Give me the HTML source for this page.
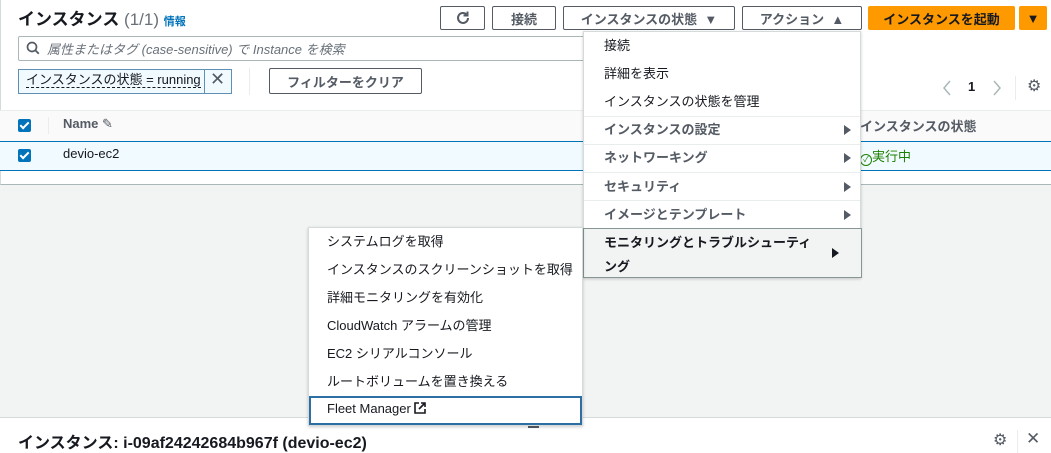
<!DOCTYPE html>
<html><head><meta charset="utf-8"><style>
*{box-sizing:border-box;margin:0;padding:0}
body{width:1051px;height:453px;overflow:hidden;background:#f2f3f3;font-family:"Liberation Sans","Noto Sans CJK JP",sans-serif;font-size:13px;color:#16191f;position:relative}
.a{position:absolute}
.btn{position:absolute;top:6px;height:24px;border:1px solid #545b64;background:#fff;font-weight:bold;color:#545b64;font-size:13px;display:flex;align-items:center;justify-content:center;border-radius:2px}
.mi{position:absolute;left:20px;font-size:13px;color:#16191f}
.arr{position:absolute;left:260px;width:0;height:0;border-top:5px solid transparent;border-bottom:5px solid transparent;border-left:7px solid #545b64}
.cb{position:absolute;width:13px;height:13px;background:#0073bb;border-radius:2px}
.cb:after{content:"";position:absolute;left:4px;top:1px;width:3px;height:7px;border:solid #fff;border-width:0 2px 2px 0;transform:rotate(45deg)}
</style></head><body>
<div class="a" style="left:0;top:0;width:1051px;height:185px;background:#fff;border-bottom:1px solid #aab7b8;border-left:1px solid #d5dbdb"></div>
<div class="a" style="left:18px;top:5px;font-size:17px;font-weight:bold">インスタンス <span style="font-weight:normal;color:#687078">(1/1)</span> <span style="font-size:11px;color:#0073bb;font-weight:bold">情報</span></div>
<div class="btn" style="left:440px;width:45px"><svg width="16" height="16" viewBox="0 0 16 16"><path d="M13 8a5 5 0 1 1-1.6-3.7" fill="none" stroke="#545b64" stroke-width="2"/><path d="M12.5 1.5v4h-4" fill="none" stroke="#545b64" stroke-width="2"/></svg></div>
<div class="btn" style="left:492px;width:64px">接続</div>
<div class="btn" style="left:563px;width:172px">インスタンスの状態&nbsp;&nbsp;▼</div>
<div class="btn" style="left:742px;width:120px">アクション&nbsp;&nbsp;▲</div>
<div class="btn" style="left:868px;width:147px;background:#ff9900;border-color:#ff9900;color:#16191f">インスタンスを起動</div>
<div class="btn" style="left:1019px;width:28px;background:#ff9900;border-color:#ff9900;color:#16191f">▼</div>
<div class="a" style="left:18px;top:36px;width:600px;height:25px;border:1px solid #aab7b8;border-radius:2px"></div>
<svg class="a" style="left:26px;top:41px" width="14" height="14" viewBox="0 0 14 14"><circle cx="6" cy="6" r="4.5" fill="none" stroke="#545b64" stroke-width="1.7"/><path d="M9.3 9.3l3.5 3.5" stroke="#545b64" stroke-width="1.8"/></svg>
<div class="a" style="left:47px;top:39px;font-style:italic;color:#687078">属性またはタグ (case-sensitive) で Instance を検索</div>
<div class="a" style="left:18px;top:69px;width:214px;height:25px;border:1px solid #5f8fb3;background:#f1faff"></div>
<div class="a" style="left:204px;top:69px;width:1px;height:25px;background:#5f8fb3"></div>
<div class="a" style="left:26px;top:72px;border-bottom:1px dashed #16191f;line-height:15px">インスタンスの状態 = running</div>
<div class="a" style="left:210px;top:69px;font-size:18px;color:#545b64">✕</div>
<div class="a" style="left:249px;top:68px;width:1px;height:27px;background:#eaeded"></div>
<div class="btn" style="left:269px;top:68px;width:153px;height:26px">フィルターをクリア</div>
<svg class="a" style="left:942px;top:80px" width="10" height="16" viewBox="0 0 10 16"><path d="M8 1L2 8l6 7" fill="none" stroke="#aab7b8" stroke-width="1.5"/></svg>
<div class="a" style="left:968px;top:79px;font-weight:bold">1</div>
<svg class="a" style="left:992px;top:80px" width="10" height="16" viewBox="0 0 10 16"><path d="M2 1l6 7-6 7" fill="none" stroke="#aab7b8" stroke-width="1.5"/></svg>
<div class="a" style="left:1015px;top:76px;width:1px;height:24px;background:#eaeded"></div>
<div class="a" style="left:1027px;top:76px;font-size:16px;color:#545b64">⚙</div>
<div class="a" style="left:0;top:110px;width:1051px;height:31px;background:#fafafa;border-top:1px solid #eaeded"></div>
<div class="cb" style="left:18px;top:119px"></div>
<div class="a" style="left:48px;top:117px;width:1px;height:17px;background:#eaeded"></div>
<div class="a" style="left:63px;top:116px;font-weight:bold;color:#545b64">Name <span style="font-weight:normal">✎</span></div>
<div class="a" style="left:860px;top:116px;font-weight:bold;color:#545b64">インスタンスの状態</div>
<div class="a" style="left:0;top:141px;width:1051px;height:30px;background:#f1faff;border-top:1px solid #0073bb;border-bottom:1px solid #0073bb"></div>
<div class="cb" style="left:18px;top:149px"></div>
<div class="a" style="left:63px;top:146px">devio-ec2</div>
<div class="a" style="left:860px;top:146px;color:#1d8102"><span style="display:inline-block;width:12px;height:12px;border:1.5px solid #1d8102;border-radius:50%;font-size:8px;line-height:9px;text-align:center;vertical-align:-1px">✓</span>実行中</div>
<div class="a" style="left:0;top:417px;width:1051px;height:36px;background:#fff;border-top:1px solid #d5dbdb"></div>
<div class="a" style="left:528px;top:426px;width:11px;height:2px;background:#545b64"></div>
<div class="a" style="left:18px;top:429px;font-size:16px;font-weight:bold">インスタンス: i-09af24242684b967f (devio-ec2)</div>
<div class="a" style="left:993px;top:430px;font-size:16px;color:#545b64">⚙</div>
<div class="a" style="left:1017px;top:430px;width:1px;height:23px;background:#eaeded"></div>
<div class="a" style="left:1026px;top:429px;font-size:17px;color:#545b64">✕</div>
<div class="a" style="left:583px;top:31px;width:278px;height:247px;background:#fff;border:1px solid #d5dbdb;box-shadow:0 1px 3px rgba(0,0,0,.2)">
<div class="mi" style="top:3px">接続</div>
<div class="mi" style="top:31px">詳細を表示</div>
<div class="mi" style="top:59px">インスタンスの状態を管理</div>
<div class="a" style="left:0;top:84px;width:276px;border-top:1px solid #eaeded"></div>
<div class="mi" style="top:87px;font-weight:bold;color:#545b64">インスタンスの設定</div><div class="arr" style="top:93px"></div>
<div class="a" style="left:0;top:112px;width:276px;border-top:1px solid #eaeded"></div>
<div class="mi" style="top:115px;font-weight:bold;color:#545b64">ネットワーキング</div><div class="arr" style="top:121px"></div>
<div class="a" style="left:0;top:140px;width:276px;border-top:1px solid #eaeded"></div>
<div class="mi" style="top:144px;font-weight:bold;color:#545b64">セキュリティ</div><div class="arr" style="top:150px"></div>
<div class="a" style="left:0;top:168px;width:276px;border-top:1px solid #eaeded"></div>
<div class="mi" style="top:172px;font-weight:bold;color:#545b64">イメージとテンプレート</div><div class="arr" style="top:178px"></div>
<div class="a" style="left:-1px;top:196px;width:279px;height:50px;background:#f2f3f3;border:1px solid #879596">
<div class="mi" style="top:2px;font-weight:bold;line-height:24px;width:220px">モニタリングとトラブルシューティング</div><div class="arr" style="top:19px;left:248px;border-left-color:#16191f"></div></div>
</div>
<div class="a" style="left:308px;top:227px;width:275px;height:199px;background:#fff;border:1px solid #d5dbdb;box-shadow:0 1px 3px rgba(0,0,0,.2);z-index:5">
<div class="mi" style="top:3px;left:18px">システムログを取得</div>
<div class="mi" style="top:31px;left:18px">インスタンスのスクリーンショットを取得</div>
<div class="mi" style="top:59px;left:18px">詳細モニタリングを有効化</div>
<div class="mi" style="top:87px;left:18px">CloudWatch アラームの管理</div>
<div class="mi" style="top:115px;left:18px">EC2 シリアルコンソール</div>
<div class="mi" style="top:143px;left:18px">ルートボリュームを置き換える</div>
<div class="a" style="left:0;top:168px;width:273px;height:29px;border:2px solid #2e6fa3"></div>
<div class="mi" style="top:173px;left:18px">Fleet Manager <svg width="12" height="12" viewBox="0 0 12 12" style="vertical-align:-1px"><path d="M5 1H1v10h10V7M7 1h4v4M11 1L5 7" fill="none" stroke="#16191f" stroke-width="1.6"/></svg></div>
</div>
</body></html>
